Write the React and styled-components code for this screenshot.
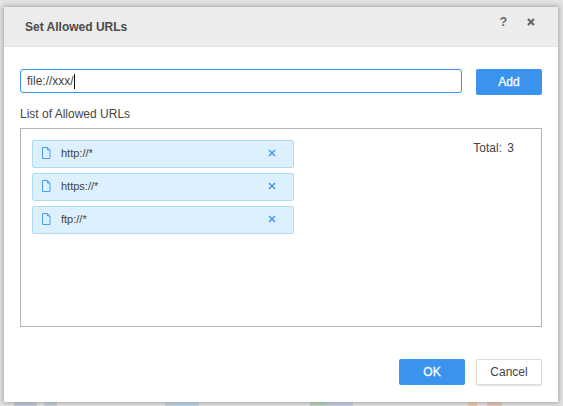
import React from 'react'
import styled, { createGlobalStyle } from 'styled-components'

const GlobalStyle = createGlobalStyle`
    html, body {
        margin: 0;
        padding: 0;
        background: #e4e4e4;
    }
    body {
        font-family: "Liberation Sans", Arial, sans-serif;
        color: #444;
    }
`

const Page = styled.div`
    width: 563px;
    height: 406px;
    box-sizing: border-box;
    padding: 7px 5px 0 4px;
    overflow: hidden;
    background: #e4e4e4;
    display: flex;
    flex-direction: column;
`

const Dialog = styled.div`
    height: 395px;
    flex: none;
    background: #fff;
    box-shadow: 0 0 5px 1px rgba(0, 0, 0, 0.28);
    display: flex;
    flex-direction: column;
    position: relative;
    z-index: 1;
`

// blurred bits of the page behind the dialog, showing under its bottom edge
const Backdrop = styled.div`
    height: 4px;
    flex: none;
    display: flex;
    margin-left: -4px;
`

const Chip = styled.div`
    flex: none;
    margin-left: ${p => p.$gap}px;
    width: ${p => p.$width}px;
    background: ${p => p.$color};
`

const Header = styled.div`
    height: 40px;
    box-sizing: border-box;
    flex: none;
    display: flex;
    align-items: center;
    padding: 0 21px;
    background: #ececec;
    border-bottom: 1px solid #e4e4e4;
`

const Title = styled.div`
    flex: 1;
    font-size: 12px;
    font-weight: bold;
    color: #4a4a4a;
`

const HeaderIcons = styled.div`
    display: flex;
    align-items: center;
    gap: 20px;
    margin-top: -10px;
    margin-right: 2px;
`

const Help = styled.span`
    font-size: 12px;
    font-weight: bold;
    color: #666;
`

const Body = styled.div`
    flex: 1;
    padding: 22px 16px 0;
    display: flex;
    flex-direction: column;
`

const InputRow = styled.div`
    display: flex;
    gap: 14px;
    align-items: flex-start;
`

const UrlInput = styled.div`
    flex: 1;
    height: 24px;
    box-sizing: border-box;
    border: 1px solid #3a93ec;
    border-radius: 3px;
    padding: 0 6px;
    display: flex;
    align-items: center;
    font-size: 12px;
    color: #444;
`

const Caret = styled.span`
    width: 1px;
    height: 15px;
    background: #111;
`

const Button = styled.button`
    width: 66px;
    height: 26px;
    padding: 0;
    box-sizing: border-box;
    border-radius: 2px;
    font-family: inherit;
    font-size: 12px;
    border: ${p => (p.$primary ? 'none' : '1px solid #ddd')};
    background: ${p => (p.$primary ? '#3a93ec' : '#fff')};
    color: ${p => (p.$primary ? '#fff' : '#444')};
    -webkit-text-stroke: ${p => (p.$primary ? '0.3px #fff' : '0')};
    box-shadow: ${p => (p.$primary ? 'none' : '0 1px 2px rgba(0, 0, 0, 0.12)')};
`

const Label = styled.div`
    margin-top: 12px;
    font-size: 12px;
    line-height: 14px;
    color: #444;
`

const ListBox = styled.div`
    margin-top: 7px;
    height: 199px;
    box-sizing: border-box;
    border: 1px solid #b3b3b3;
    padding: 11px;
    display: flex;
    justify-content: space-between;
`

const List = styled.div`
    width: 262px;
    display: flex;
    flex-direction: column;
    gap: 5px;
`

const Item = styled.div`
    height: 28px;
    box-sizing: border-box;
    display: flex;
    align-items: center;
    padding: 0 17px 2px 8px;
    background: #ddf0fd;
    border: 1px solid #aedcf7;
    border-radius: 2px;
    font-size: 11px;
    color: #444;
`

const ItemText = styled.span`
    flex: 1;
    margin-left: 10px;
`

const Total = styled.div`
    margin: 1px 16px 0 0;
    font-size: 12px;
    line-height: 14px;
    word-spacing: 2px;
    color: #444;
`

const Footer = styled.div`
    display: flex;
    justify-content: flex-end;
    gap: 11px;
    padding-top: 32px;
`

const FileIcon = () => (
    <svg width="10" height="12" viewBox="0 0 10 12" fill="none" stroke="#4a9cf5" strokeWidth="1">
        <path d="M1.5.5h5l2.5 2.5v8.500h-7.500z M6.500.5v2.500h2.500" />
    </svg>
)

const CloseIcon = ({ size, color, weight }) => (
    <svg width={size} height={size} viewBox="0 0 8 8" stroke={color} strokeWidth={weight} fill="none">
        <path d="M1 1l6 6M7 1l-6 6" />
    </svg>
)

const urls = ['http://*', 'https://*', 'ftp://*']

const backdrop = [
    { gap: 14, width: 23, color: '#c2ccd8' },
    { gap: 7, width: 13, color: '#c8d0da' },
    { gap: 108, width: 34, color: '#c2d6e6' },
    { gap: 111, width: 15, color: '#bdd4c4' },
    { gap: 0, width: 28, color: '#c8d2e0' },
    { gap: 115, width: 9, color: '#e6cdbc' },
    { gap: 10, width: 15, color: '#e6c8b8' },
]

const App = () => {
    return (
        <Page>
            <GlobalStyle />
            <Dialog>
                <Header>
                    <Title>Set Allowed URLs</Title>
                    <HeaderIcons>
                        <Help>?</Help>
                        <CloseIcon size={8} color="#666" weight="2.200" />
                    </HeaderIcons>
                </Header>
                <Body>
                    <InputRow>
                        <UrlInput>file://xxx/<Caret /></UrlInput>
                        <Button $primary>Add</Button>
                    </InputRow>
                    <Label>List of Allowed URLs</Label>
                    <ListBox>
                        <List>
                            {urls.map(url => (
                                <Item key={url}>
                                    <FileIcon />
                                    <ItemText>{url}</ItemText>
                                    <CloseIcon size={8} color="#4a9cf5" weight="1.700" />
                                </Item>
                            ))}
                        </List>
                        <Total>Total: 3</Total>
                    </ListBox>
                    <Footer>
                        <Button $primary>OK</Button>
                        <Button>Cancel</Button>
                    </Footer>
                </Body>
            </Dialog>
            <Backdrop>
                {backdrop.map((c, i) => (
                    <Chip key={i} $gap={c.gap} $width={c.width} $color={c.color} />
                ))}
            </Backdrop>
        </Page>
    )
}

export default App
